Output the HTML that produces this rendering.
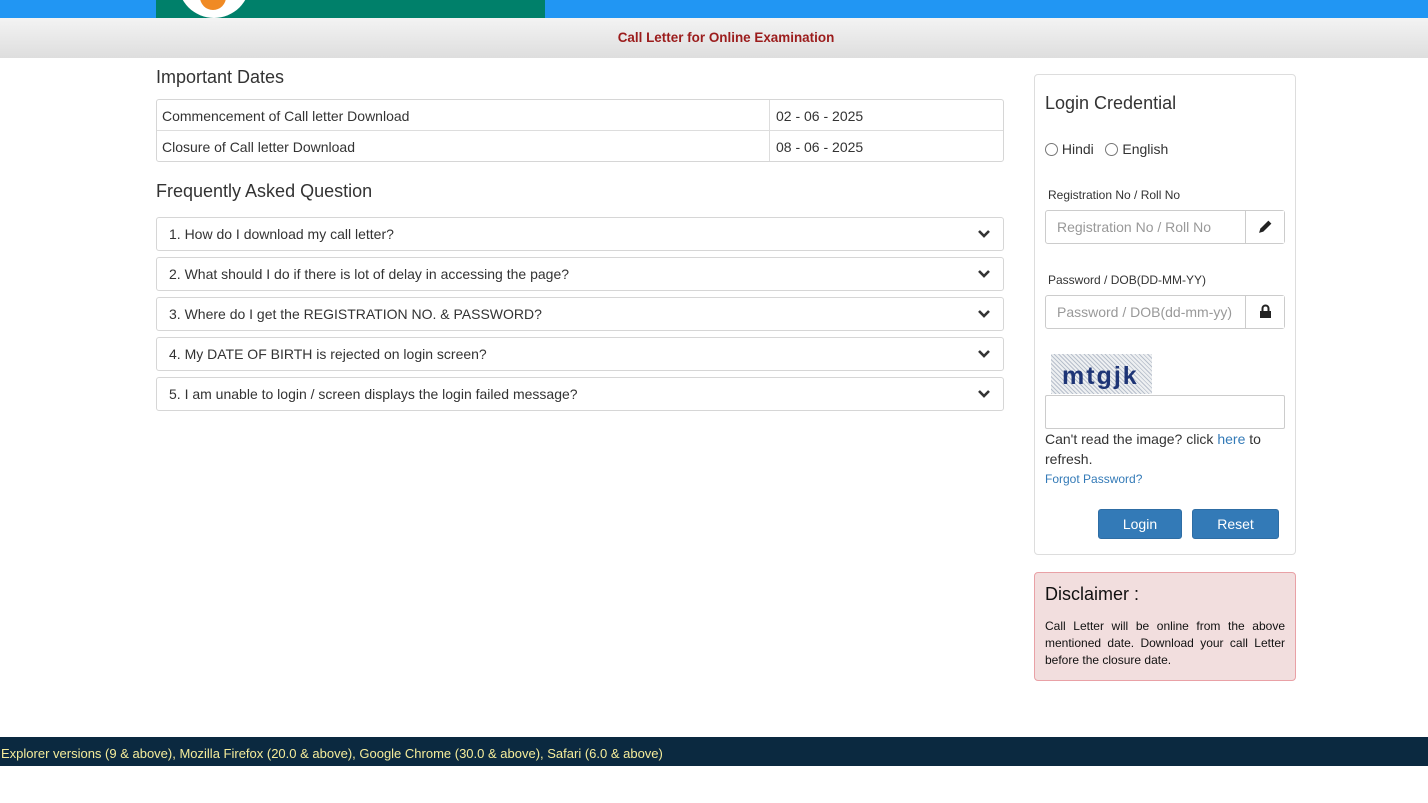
<!DOCTYPE html>
<html><head><meta charset="utf-8"><style>
*{box-sizing:border-box;margin:0;padding:0}
body{width:1428px;height:803px;background:#fff;font-family:"Liberation Sans",Arial,sans-serif;color:#333;position:relative;overflow:hidden}
.a{position:absolute}
.row{position:absolute;left:156px;width:848px;height:34px;border:1px solid #d6d6d6;border-radius:3px;font-size:14px;line-height:32px;padding-left:12px;color:#333}
.row svg{position:absolute;right:13px;top:11px}
.inp{position:absolute;left:1045px;width:240px;height:34px;border:1px solid #ccc;border-radius:3px;font-size:14px;line-height:32px;padding-left:11px;color:#999}
.inp .ad{position:absolute;right:0;top:0;width:39px;height:32px;border-left:1px solid #ccc;background:#fff}
.btn{position:absolute;top:509px;height:30px;background:#337ab7;border:1px solid #2e6da4;border-radius:3px;color:#fff;font-size:14px;line-height:28px;text-align:center}
</style></head><body>
<div class="a" style="left:0;top:0;width:1428px;height:18px;background:#2196f3"></div>
<div class="a" style="left:156px;top:0;width:389px;height:18px;background:#00806a"></div>
<div class="a" style="left:178px;top:-30px;width:72px;height:48px;background:#fff;border-radius:0 0 36px 36px"></div>
<div class="a" style="left:200px;top:-10px;width:26px;height:20px;background:#f08a24;border-radius:0 0 13px 13px"></div>
<div class="a" style="left:0;top:18px;width:1428px;height:40px;background:linear-gradient(#f3f3f3,#dedede)"></div>
<div class="a" style="left:0;top:28px;width:1452px;text-align:center;font-size:14px;font-weight:bold;color:#9b1c1c;line-height:18px;transform:scaleX(0.96)">Call Letter for Online Examination</div>

<div class="a" style="left:156px;top:67px;font-size:18px;color:#333">Important Dates</div>
<div class="a" style="left:156px;top:99px;width:848px;height:63px;border:1px solid #d6d6d6;border-radius:3px;font-size:14px">
 <div class="a" style="left:0;top:0;width:846px;height:31px;border-bottom:1px solid #ddd"></div>
 <div class="a" style="left:612px;top:0;width:1px;height:61px;background:#ddd"></div>
 <div class="a" style="left:5px;top:8px">Commencement of Call letter Download</div>
 <div class="a" style="left:619px;top:8px">02 - 06 - 2025</div>
 <div class="a" style="left:5px;top:39px">Closure of Call letter Download</div>
 <div class="a" style="left:619px;top:39px">08 - 06 - 2025</div>
</div>
<div class="a" style="left:156px;top:181px;font-size:18px;color:#333">Frequently Asked Question</div>
<div class="row" style="top:217px">1. How do I download my call letter?<svg width="12" height="10" viewBox="0 0 12 10"><path d="M1 2l5 5 5-5" stroke="#333" stroke-width="2.6" fill="none"/></svg></div>
<div class="row" style="top:257px">2. What should I do if there is lot of delay in accessing the page?<svg width="12" height="10" viewBox="0 0 12 10"><path d="M1 2l5 5 5-5" stroke="#333" stroke-width="2.6" fill="none"/></svg></div>
<div class="row" style="top:297px">3. Where do I get the REGISTRATION NO. &amp; PASSWORD?<svg width="12" height="10" viewBox="0 0 12 10"><path d="M1 2l5 5 5-5" stroke="#333" stroke-width="2.6" fill="none"/></svg></div>
<div class="row" style="top:337px">4. My DATE OF BIRTH is rejected on login screen?<svg width="12" height="10" viewBox="0 0 12 10"><path d="M1 2l5 5 5-5" stroke="#333" stroke-width="2.6" fill="none"/></svg></div>
<div class="row" style="top:377px">5. I am unable to login / screen displays the login failed message?<svg width="12" height="10" viewBox="0 0 12 10"><path d="M1 2l5 5 5-5" stroke="#333" stroke-width="2.6" fill="none"/></svg></div>

<div class="a" style="left:1034px;top:74px;width:262px;height:481px;border:1px solid #ddd;border-radius:4px"></div>
<div class="a" style="left:1045px;top:93px;font-size:18px;color:#333">Login Credential</div>
<div class="a" style="left:1045px;top:140px;font-size:14px;line-height:18px;color:#333">
<span style="display:inline-block;width:13px;height:13px;border:1px solid #777;border-radius:50%;vertical-align:-2px"></span> Hindi &nbsp;&nbsp;<span style="display:inline-block;width:13px;height:13px;border:1px solid #777;border-radius:50%;vertical-align:-2px"></span> English</div>
<div class="a" style="left:1048px;top:188px;font-size:12px;color:#333">Registration No / Roll No</div>
<div class="inp" style="top:210px">Registration No / Roll No<div class="ad"><svg style="position:absolute;left:12px;top:8px" width="15" height="15" viewBox="0 0 14 14"><path d="M1 13l1.2-4 7.5-7.5 2.8 2.8-7.5 7.5z" fill="#222"/></svg></div></div>
<div class="a" style="left:1048px;top:273px;font-size:12px;color:#333">Password / DOB(DD-MM-YY)</div>
<div class="inp" style="top:295px">Password / DOB(dd-mm-yy)<div class="ad"><svg style="position:absolute;left:13px;top:8px" width="13" height="15" viewBox="0 0 13 15"><path d="M3.5 7V4.5a3 3 0 016 0V7" stroke="#222" stroke-width="2" fill="none"/><rect x="1" y="7" width="11" height="7" fill="#222"/></svg></div></div>
<div class="a" style="left:1051px;top:354px;width:101px;height:40px;background:repeating-linear-gradient(45deg,#b8c0cc 0 1px,#eef0f2 1px 3px),#ddd;font-family:'Liberation Sans',sans-serif;font-weight:bold;font-size:25px;color:#1e3576;line-height:44px;padding-left:11px;letter-spacing:2px">mtgjk</div>
<div class="a" style="left:1045px;top:395px;width:240px;height:34px;border:1px solid #ccc;border-radius:2px"></div>
<div class="a" style="left:1045px;top:429px;width:240px;font-size:14px;line-height:20px;color:#333">Can't read the image? click <span style="color:#337ab7">here</span> to refresh.</div>
<div class="a" style="left:1045px;top:472px;font-size:12px;color:#337ab7">Forgot Password?</div>
<div class="btn" style="left:1098px;width:84px">Login</div>
<div class="btn" style="left:1192px;width:87px">Reset</div>

<div class="a" style="left:1034px;top:572px;width:262px;height:109px;border:1px solid #e9a1a6;border-radius:4px;background:#f2dede"></div>
<div class="a" style="left:1045px;top:584px;font-size:18px;color:#111">Disclaimer :</div>
<div class="a" style="left:1045px;top:618px;width:240px;font-size:12px;line-height:17px;color:#111;text-align:justify">Call Letter will be online from the above mentioned date. Download your call Letter before the closure date.</div>

<div class="a" style="left:0;top:737px;width:1428px;height:29px;background:#0b2940"></div>
<div class="a" style="left:1px;top:746px;font-size:13px;color:#f5ec9a;line-height:16px">Explorer versions (9 &amp; above), Mozilla Firefox (20.0 &amp; above), Google Chrome (30.0 &amp; above), Safari (6.0 &amp; above)</div>
</body></html>
